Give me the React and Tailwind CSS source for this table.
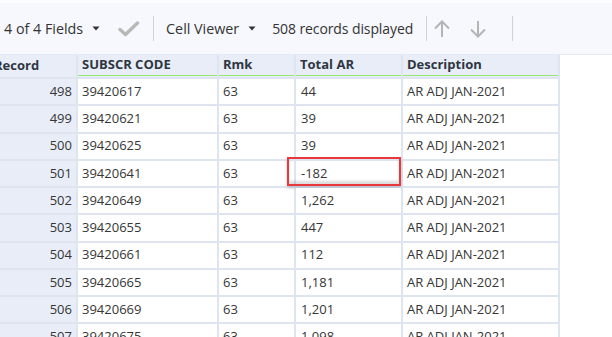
import React from "react";

const rows = [
  ["498", "39420617", "63", "44"],
  ["499", "39420621", "63", "39"],
  ["500", "39420625", "63", "39"],
  ["501", "39420641", "63", "-182"],
  ["502", "39420649", "63", "1,262"],
  ["503", "39420655", "63", "447"],
  ["504", "39420661", "63", "112"],
  ["505", "39420665", "63", "1,181"],
  ["506", "39420669", "63", "1,201"],
  ["507", "39420675", "63", "1,098"],
];

function Caret() {
  return (
    <svg width="8" height="5" viewBox="0 0 8 5" className="mx-[9px]">
      <path d="M0.5 0.5 L7.5 0.5 L4 4.5 Z" fill="#333" />
    </svg>
  );
}

function Sep() {
  return <div className="w-px h-[25px] bg-[#cdd2da]" />;
}

export default function App() {
  return (
    <div
      className="w-[612px] h-[337px] overflow-hidden bg-white text-[#363636]"
      style={{ fontFamily: '"Open Sans", "Noto Sans", sans-serif' }}
    >
      {/* toolbar */}
      <div className="h-[55px] bg-[#f6f8fd] border-t-[3px] border-[#fbfcfe] border-b border-b-[#e4e8ef] flex items-center text-[14.3px] text-[#333]">
        <span className="ml-[4px]">4 of 4 Fields</span>
        <Caret />
        <svg width="22" height="16" viewBox="0 0 22 16" className="ml-[9px] mr-[13px]">
          <path d="M2 8.5 L7.5 13.5 L19.5 2" fill="none" stroke="#b8b8b8" strokeWidth="3.4" strokeLinecap="round" strokeLinejoin="round" />
        </svg>
        <Sep />
        <span className="ml-[12px]">Cell Viewer</span>
        <Caret />
        <span className="ml-[7px] text-[14px] tracking-[-0.1px]">508 records displayed</span>
        <div className="ml-[13px]"><Sep /></div>
        <svg width="20" height="20" viewBox="0 0 20 20" className="ml-[5px]">
          <path d="M10 18 V3 M3 9.5 L10 2.5 L17 9.5" fill="none" stroke="#b4b4b4" strokeWidth="2" />
        </svg>
        <svg width="20" height="20" viewBox="0 0 20 20" className="ml-[16px]">
          <path d="M10 2 V17 M3 10.5 L10 17.5 L17 10.5" fill="none" stroke="#b4b4b4" strokeWidth="2" />
        </svg>
        <div className="ml-[24px]"><Sep /></div>
      </div>

      {/* grid */}
      <div className="w-[560px] bg-[#dfe5f0] pr-[2px] text-[13px]">
        {/* header */}
        <div className="flex gap-[2px] h-[22px] bg-[#dfe5f0] font-bold text-[#2f3642] text-[13px]">
          <div className="w-[76px] bg-[#e8edf7] flex items-center overflow-hidden">
            <span className="-ml-[6px]">Record</span>
          </div>
          {[
            ["SUBSCR CODE", "w-[139px]"],
            ["Rmk", "w-[75px]"],
            ["Total AR", "w-[105px]"],
            ["Description", "flex-1"],
          ].map(([t, w]) => (
            <div key={t} className={`${w} bg-[#e8edf7] flex flex-col`}>
              <div className="flex-1 flex items-center pl-[4px]">{t}</div>
              <div className="h-[2px] bg-[#93e66e] mb-[2px]" />
            </div>
          ))}
        </div>
        <div className="flex flex-col gap-[2px] pt-[2px]">
          {rows.map((r) => (
            <div key={r[0]} className="flex gap-[2px] h-[25.25px]">
              <div className="w-[76px] bg-[#e8edf7] flex items-center justify-end pr-[4px]">{r[0]}</div>
              <div className="w-[139px] bg-white flex items-center pl-[4px]">{r[1]}</div>
              <div className="w-[75px] bg-white flex items-center pl-[4px]">{r[2]}</div>
              <div className="w-[105px] bg-white flex items-center pl-[5px] relative">
                {r[3]}
                {r[0] === "501" && (
                  <div className="absolute left-[-9px] top-[-4px] w-[114px] h-[29px] border-[2px] border-[#e8383d] shadow-[inset_0_-3px_3px_rgba(0,0,0,0.14),0_2px_3px_rgba(0,0,0,0.18)]" />
                )}
              </div>
              <div className="flex-1 bg-white flex items-center pl-[4px]">AR ADJ JAN-2021</div>
            </div>
          ))}
        </div>
      </div>
    </div>
  );
}
